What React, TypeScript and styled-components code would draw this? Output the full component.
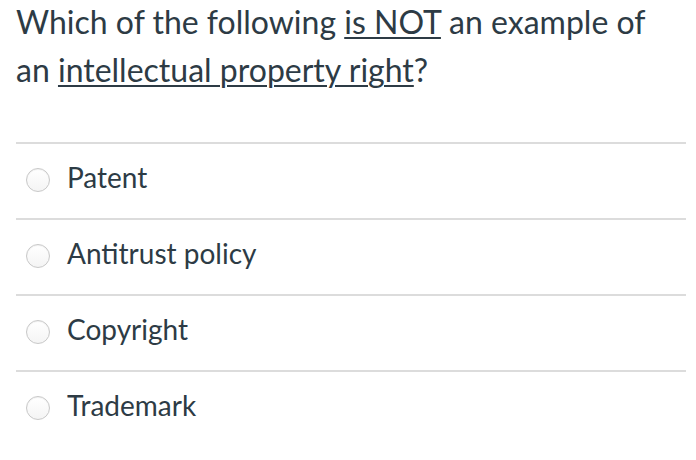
import React from 'react';
import styled, { createGlobalStyle } from 'styled-components';

const GlobalStyle = createGlobalStyle`
  html, body {
    margin: 0;
    padding: 0;
    background: #ffffff;
  }
  body {
    font-family: Lato, "Liberation Sans", sans-serif;
    color: #2d3b45;
  }
`;

const Page = styled.div`
  width: 696px;
  height: 460px;
  overflow: hidden;
  padding: 0 10px 0 16px;
  box-sizing: border-box;
`;

const Question = styled.p`
  margin: -2px 0 0;
  font-size: 32px;
  line-height: 48px;
  height: 144px;
  font-weight: 400;
`;

const Mark = styled.span`
  text-decoration: underline;
  text-decoration-thickness: 2px;
  text-underline-offset: 3px;
`;

const Answers = styled.div`
  display: flex;
  flex-direction: column;
`;

const Answer = styled.label`
  display: flex;
  align-items: center;
  gap: 17px;
  height: 74px;
  border-top: 2px solid #dcdcdc;
  padding-left: 10px;
`;

const Radio = styled.span`
  width: 22px;
  height: 22px;
  margin-bottom: 2px;
  border-radius: 50%;
  border: 1px solid #c8c8c8;
  background: linear-gradient(#ffffff, #f4f4f4);
  box-shadow: inset 0 1px 1px rgba(0, 0, 0, 0.06);
  flex-shrink: 0;
`;

const AnswerText = styled.span`
  font-size: 28px;
  line-height: 1;
  padding-bottom: 8px;
`;

const options = ['Patent', 'Antitrust policy', 'Copyright', 'Trademark'];

export default function App() {
  return (
    <Page>
      <GlobalStyle />
      <Question>
        Which of the following <Mark>is NOT</Mark> an example of an{' '}
        <Mark>intellectual property right</Mark>?
      </Question>
      <Answers>
        {options.map((o) => (
          <Answer key={o}>
            <Radio />
            <AnswerText>{o}</AnswerText>
          </Answer>
        ))}
      </Answers>
    </Page>
  );
}
